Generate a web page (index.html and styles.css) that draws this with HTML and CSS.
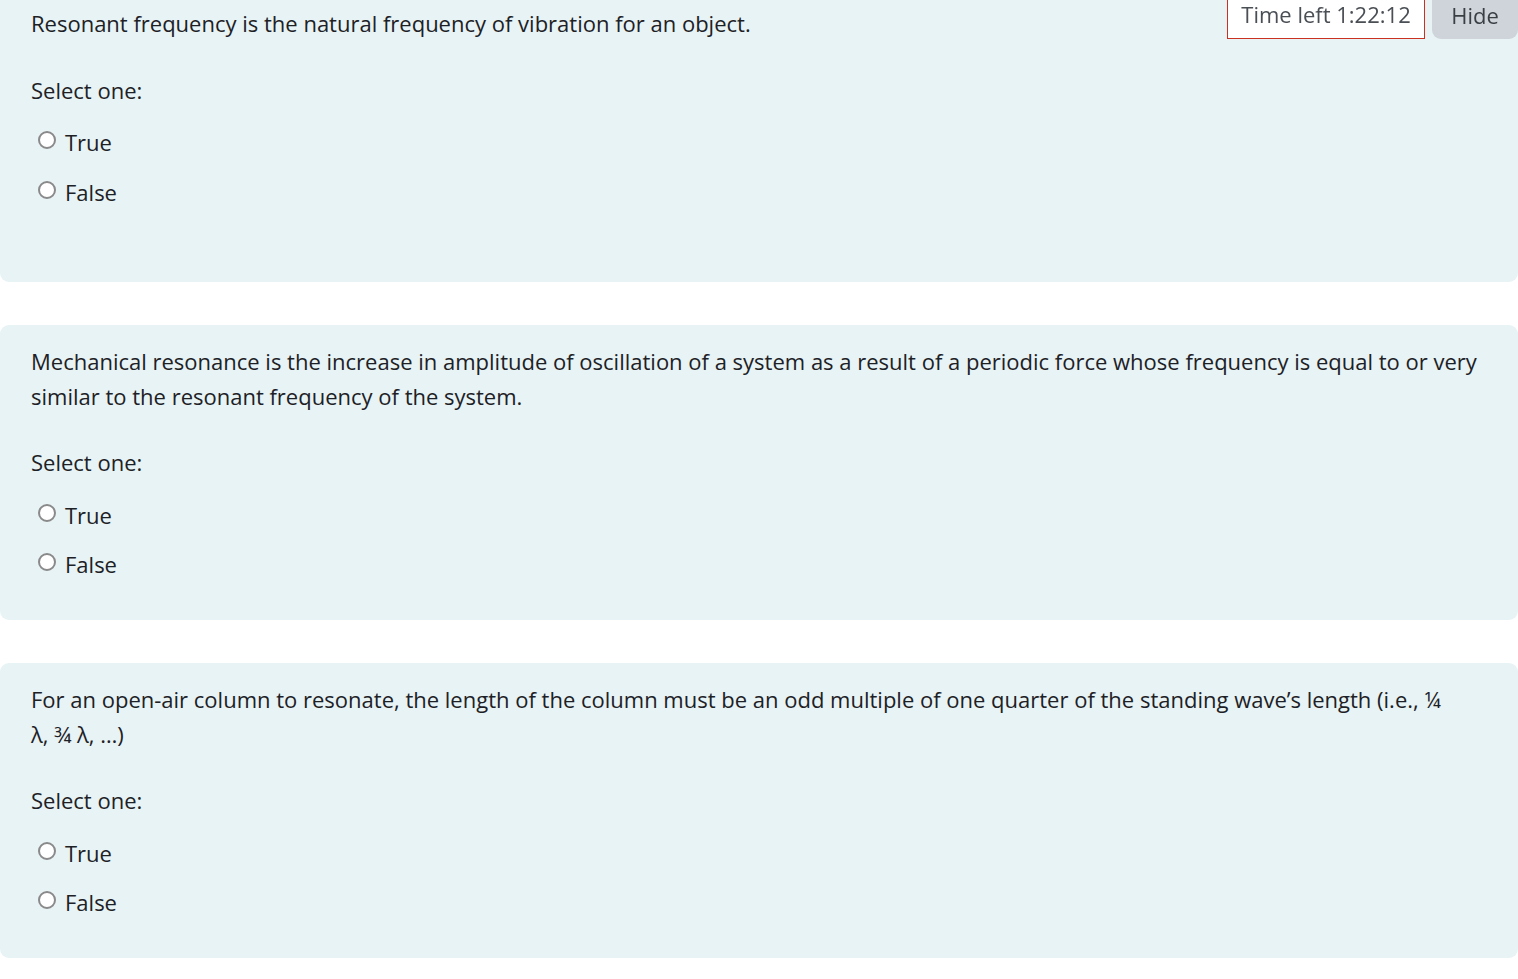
FILE: index.html
```html
<!DOCTYPE html>
<html lang="en">
    <head>
        <meta charset="UTF-8">
        <meta name="viewport" content="width=device-width,initial-scale=1.0">
        <title>Quiz</title>
        <link rel="stylesheet" href="styles.css">
    </head>
    <body>
        <div class="timer-wrap">
            <div class="timer">Time left 1:22:12</div>
            <button class="hide-btn">Hide</button>
        </div>
        <div class="quiz">
            <div class="que first">
                <div class="qtext">Resonant frequency is the natural frequency of vibration for an object.</div>
                <div class="prompt">Select one:</div>
                <div class="answer">
                    <label class="opt"><input type="radio" name="q1">True</label>
                    <label class="opt"><input type="radio" name="q1">False</label>
                </div>
            </div>
            <div class="que">
                <div class="qtext">Mechanical resonance is the increase in amplitude of oscillation of a system as a result of a periodic force whose frequency is equal to or very similar to the resonant frequency of the system.</div>
                <div class="prompt">Select one:</div>
                <div class="answer">
                    <label class="opt"><input type="radio" name="q2">True</label>
                    <label class="opt"><input type="radio" name="q2">False</label>
                </div>
            </div>
            <div class="que">
                <div class="qtext">For an open-air column to resonate, the length of the column must be an odd multiple of one quarter of the standing wave’s length (i.e., ¼<br>λ, ¾ λ, …)</div>
                <div class="prompt">Select one:</div>
                <div class="answer">
                    <label class="opt"><input type="radio" name="q3">True</label>
                    <label class="opt"><input type="radio" name="q3">False</label>
                </div>
            </div>
        </div>
    </body>
</html>
```

FILE: styles.css
```css
*{
    margin: 0;
    padding: 0;
    box-sizing: border-box;
}
body{
    background: #fff;
    font-family: "Open Sans", "Noto Sans", sans-serif;
    font-size: 22px;
    line-height: 34.5px;
    color: #1d2125;
    overflow: hidden;
}
.quiz{
    display: flex;
    flex-direction: column;
    gap: 43px;
    margin-top: -13px;
}
.que{
    min-height: 295px;
    background-color: #e7f3f5;
    border-radius: 9px;
    padding: 19px 28px 20px 31px;
}
.qtext{
    margin-bottom: 32px;
}
.prompt{
    margin-bottom: 18px;
}
.answer{
    display: flex;
    flex-direction: column;
    gap: 15px;
}
.opt{
    display: flex;
    align-items: center;
    padding-left: 7px;
}
.opt input{
    appearance: none;
    width: 18px;
    height: 18px;
    border: 2px solid #8a8a8a;
    border-radius: 50%;
    background: #fff;
    margin-right: 9px;
    position: relative;
    top: -2px;
}
.timer-wrap{
    position: fixed;
    top: -12px;
    right: 0;
    display: flex;
    gap: 7px;
    z-index: 10;
}
.timer{
    width: 198px;
    height: 51px;
    background: #fff;
    border: 1px solid #ca3120;
    color: #4a4f55;
    display: flex;
    align-items: center;
    justify-content: center;
    padding-top: 2px;
}
.hide-btn{
    width: 86px;
    height: 51px;
    border: none;
    border-radius: 9px;
    background: #ced4da;
    color: #3a3f44;
    font-family: inherit;
    font-size: 22px;
    padding-top: 2px;
}
```
